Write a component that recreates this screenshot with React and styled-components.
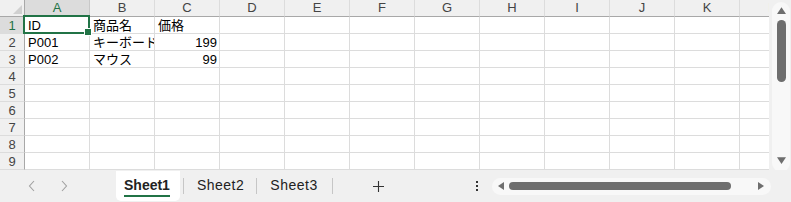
import React from 'react';
import styled, { createGlobalStyle } from 'styled-components';

const GlobalStyle = createGlobalStyle`
  html, body {
    margin: 0;
    padding: 0;
    background: #ffffff;
  }
  * {
    box-sizing: border-box;
  }
`;

const COLS = ['A', 'B', 'C', 'D', 'E', 'F', 'G', 'H', 'I', 'J', 'K', 'L'];
const ROWS = [
  ['ID', '商品名', '価格'],
  ['P001', 'キーボード', '199'],
  ['P002', 'マウス', '99'],
  [],
  [],
  [],
  [],
  [],
  [],
];
const GREEN = '#217346';

const Frame = styled.div`
  width: 791px;
  height: 202px;
  display: flex;
  flex-direction: column;
  font-family: 'Liberation Sans', 'Noto Sans CJK JP', sans-serif;
  background: #f0f0f0;
  overflow: hidden;
`;

const Main = styled.div`
  height: 170px;
  display: flex;
`;

const Sheet = styled.div`
  width: 769px;
  height: 170px;
  overflow: hidden;
  display: grid;
  grid-template-columns: 25px repeat(11, 65px) 65px;
  grid-template-rows: 17px repeat(9, 17px);
  background: #ffffff;
`;

const Corner = styled.div`
  position: relative;
  background: #f0f0f0;
  border-right: 1px solid #a8a8a8;
  border-bottom: 1px solid #a8a8a8;
  svg {
    position: absolute;
    right: 2px;
    bottom: 2px;
  }
`;

const ColHead = styled.div`
  background: ${(p) => (p.$active ? '#dcdcdc' : '#f0f0f0')};
  color: ${(p) => (p.$active ? GREEN : '#444444')};
  border-right: 1px solid ${(p) => (p.$active ? '#c8c8c8' : '#dcdcdc')};
  border-bottom: 1px solid #a8a8a8;
  font-size: 13px;
  line-height: 16px;
  text-align: center;
`;

const RowHead = styled.div`
  background: ${(p) => (p.$active ? '#dcdcdc' : '#f0f0f0')};
  color: ${(p) => (p.$active ? GREEN : '#444444')};
  border-right: 1px solid #a8a8a8;
  border-bottom: 1px solid #dcdcdc;
  font-size: 13px;
  line-height: 17px;
  text-align: center;
`;

const Cell = styled.div`
  position: relative;
  z-index: ${(p) => (p.$sel ? 2 : 'auto')};
  border-right: 1px solid #dcdcdc;
  border-bottom: 1px solid #dcdcdc;
  font-size: 13px;
  line-height: 17px;
  color: #000000;
  padding: 0 2px 0 3px;
  white-space: nowrap;
  overflow: ${(p) => (p.$clip ? 'hidden' : 'visible')};
  text-align: ${(p) => (p.$num ? 'right' : 'left')};
  font-family: 'Liberation Sans', 'Noto Sans CJK JP', sans-serif;
`;

const Selection = styled.div`
  position: absolute;
  z-index: 3;
  left: -2px;
  top: -2px;
  right: -1px;
  bottom: -1px;
  border: 2px solid ${GREEN};
  pointer-events: none;
  &::after {
    content: '';
    position: absolute;
    right: -4px;
    bottom: -4px;
    width: 6px;
    height: 6px;
    background: ${GREEN};
    border: 1px solid #ffffff;
  }
`;

const VScroll = styled.div`
  width: 22px;
  height: 170px;
  background: #f0f0f0;
  padding: 2px 1px 0 3px;
`;

const VTrack = styled.div`
  height: 170px;
  border-radius: 9px;
  background: #f8f8f8;
  display: flex;
  flex-direction: column;
  align-items: center;
  padding-top: 4px;
`;

const VThumb = styled.div`
  width: 9px;
  height: 62px;
  margin-top: 5px;
  border-radius: 5px;
  background: #6e6e6e;
`;

const Spacer = styled.div`
  flex: 1;
`;

const VDown = styled.div`
  margin-bottom: 7px;
  display: flex;
`;

const BottomBar = styled.div`
  height: 32px;
  display: flex;
  align-items: center;
  background: #f0f0f0;
`;

const NavGroup = styled.div`
  width: 116px;
  display: flex;
  align-items: center;
  gap: 24px;
  padding-left: 28px;
`;

const Tab = styled.div`
  height: 30px;
  margin-top: 1px;
  align-self: flex-start;
  padding: ${(p) => (p.$active ? '0 10px 0 8px' : '0')};
  display: flex;
  align-items: center;
  font-size: 14px;
  letter-spacing: ${(p) => (p.$active ? '0' : '0.5px')};
  color: #222222;
  font-weight: ${(p) => (p.$active ? 700 : 400)};
  background: ${(p) => (p.$active ? '#ffffff' : 'transparent')};
  border-radius: 0 0 5px 5px;
  span {
    position: relative;
    top: -1px;
  }
  span::after {
    content: '';
    display: ${(p) => (p.$active ? 'block' : 'none')};
    position: absolute;
    left: 0;
    right: 0;
    bottom: -4px;
    height: 2px;
    background: ${GREEN};
  }
`;

const TabSep = styled.div`
  width: 1px;
  height: 16px;
  margin: 0 ${(p) => p.$mr}px 0 ${(p) => p.$ml}px;
  background: #c6c6c6;
`;

const PlusBtn = styled.div`
  margin-left: 39px;
  display: flex;
  align-items: center;
`;

const Kebab = styled.div`
  margin-left: 91px;
  display: flex;
  flex-direction: column;
  gap: 2px;
  i {
    width: 2px;
    height: 2px;
    background: #333333;
  }
`;

const HTrack = styled.div`
  margin-left: 14px;
  width: 279px;
  height: 17px;
  border-radius: 9px;
  background: #f8f8f8;
  display: flex;
  align-items: center;
  padding: 0 6px 0 5px;
`;

const HThumb = styled.div`
  height: 8px;
  width: 222px;
  margin-left: 4px;
  border-radius: 4px;
  background: #6e6e6e;
`;

const Chevron = ({ dir }) => (
  <svg width="8" height="12" viewBox="0 0 8 12">
    <path
      d={dir === 'left' ? 'M6 1 L1.5 6 L6 11' : 'M2 1 L6.5 6 L2 11'}
      fill="none"
      stroke="#a0a0a0"
      strokeWidth="1.1"
    />
  </svg>
);

const Tri = ({ dir, size = 8 }) => {
  const pts = {
    up: '0,7 4,1 8,7',
    down: '0,1 8,1 4,7',
    left: '7,0 7,8 1,4',
    right: '1,0 1,8 7,4',
  };
  return (
    <svg width={size} height={size} viewBox="0 0 8 8">
      <polygon points={pts[dir]} fill="#6e6e6e" />
    </svg>
  );
};

export default function App() {
  return (
    <Frame>
      <GlobalStyle />
      <Main>
        <Sheet>
          <Corner>
            <svg width="9" height="9" viewBox="0 0 9 9">
              <polygon points="9,0 9,9 0,9" fill="#d0d0d0" />
            </svg>
          </Corner>
          {COLS.map((c) => (
            <ColHead key={c} $active={c === 'A'}>
              {c}
            </ColHead>
          ))}
          {ROWS.map((row, r) => (
            <React.Fragment key={r}>
              <RowHead $active={r === 0}>{r + 1}</RowHead>
              {COLS.map((c, ci) => {
                const v = row[ci];
                const num = v && /^\d+$/.test(v);
                const sel = r === 0 && ci === 0;
                return (
                  <Cell key={c} $num={num} $clip={ci === 1} $sel={sel}>
                    {v}
                    {sel && <Selection />}
                  </Cell>
                );
              })}
            </React.Fragment>
          ))}
        </Sheet>
        <VScroll>
          <VTrack>
            <Tri dir="up" size={9} />
            <VThumb />
            <Spacer />
            <VDown>
              <Tri dir="down" size={9} />
            </VDown>
          </VTrack>
        </VScroll>
      </Main>
      <BottomBar>
        <NavGroup>
          <Chevron dir="left" />
          <Chevron dir="right" />
        </NavGroup>
        <Tab $active>
          <span>Sheet1</span>
        </Tab>
        <TabSep $ml={3} $mr={13} />
        <Tab>
          <span>Sheet2</span>
        </Tab>
        <TabSep $ml={12} $mr={13} />
        <Tab>
          <span>Sheet3</span>
        </Tab>
        <TabSep $ml={14} $mr={0} />
        <PlusBtn>
          <svg width="13" height="13" viewBox="0 0 13 13">
            <path d="M6.5 1 V12 M1 6.5 H12" stroke="#333333" strokeWidth="1.1" />
          </svg>
        </PlusBtn>
        <Kebab>
          <i />
          <i />
          <i />
        </Kebab>
        <HTrack>
          <Tri dir="left" size={8} />
          <HThumb />
          <Spacer />
          <Tri dir="right" size={8} />
        </HTrack>
      </BottomBar>
    </Frame>
  );
}
